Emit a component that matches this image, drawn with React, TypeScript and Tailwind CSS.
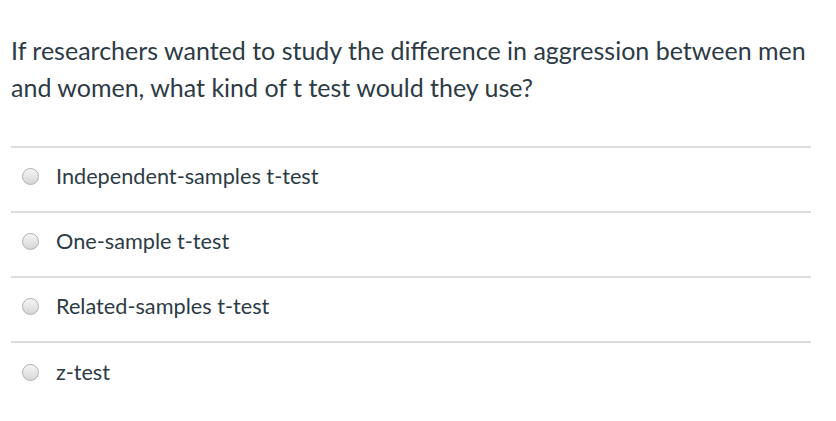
const OPTIONS = [
  'Independent-samples t-test',
  'One-sample t-test',
  'Related-samples t-test',
  'z-test',
]

export default function App() {
  return (
    <div className="w-[836px] h-[421px] bg-white pl-[11px] pr-[25px] pt-[32px] text-[#2d3b45]" style={{ fontFamily: 'Lato, "Open Sans", sans-serif' }}>
      <p className="text-[25px] leading-[37px]">
        If researchers wanted to study the difference in aggression between men and women, what kind of t test would they use?
      </p>
      <div className="mt-[40px] border-t-2 border-[#dddddd]">
        {OPTIONS.map(o => (
          <label key={o} className="flex items-center h-[65px] pb-[7px] border-b-2 border-[#dddddd] last:border-b-0">
            <span className="ml-[11px] w-[17px] h-[17px] rounded-full border border-[#b0b0b0] bg-gradient-to-b from-[#f6f6f6] to-[#d6d6d6]" />
            <span className="ml-[17px] text-[21.7px]">{o}</span>
          </label>
        ))}
      </div>
    </div>
  )
}
